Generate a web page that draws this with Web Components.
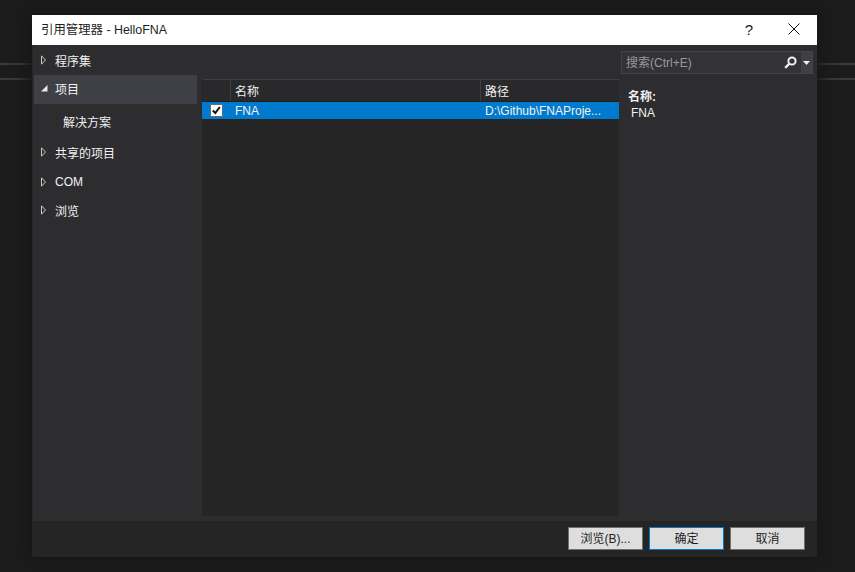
<!DOCTYPE html>
<html lang="zh">
<head>
<meta charset="utf-8">
<title>引用管理器</title>
<style>
html, body { margin: 0; height: 100%; background: #1b1b1c; overflow: hidden; }
body { font: 12px "Noto Sans CJK SC", "Liberation Sans", sans-serif; color: #f1f1f1; }
</style>
</head>
<body>
<ref-desktop>
  <ref-dialog heading="引用管理器 - HelloFNA">
    <ref-nav slot="nav">
      <nav-item arrow="closed">程序集</nav-item>
      <nav-item arrow="open" selected up>项目</nav-item>
      <nav-item sub>解决方案</nav-item>
      <nav-item arrow="closed" up>共享的项目</nav-item>
      <nav-item arrow="closed">COM</nav-item>
      <nav-item arrow="closed" up>浏览</nav-item>
    </ref-nav>
    <ref-table slot="list"></ref-table>
    <search-box slot="search"></search-box>
    <ref-details slot="details"></ref-details>
    <dlg-button slot="buttons">浏览(B)...</dlg-button>
    <dlg-button slot="buttons" primary>确定</dlg-button>
    <dlg-button slot="buttons">取消</dlg-button>
  </ref-dialog>
</ref-desktop>
<script>
'use strict';

const UI_FONT = '"Liberation Sans", "Noto Sans CJK SC", sans-serif';

class Base extends HTMLElement
{
    constructor(html)
    {
        super();
        this.attachShadow({ mode: 'open' }).innerHTML = html;
    }
}

class RefDesktop extends Base {
    constructor()
    {
        super(`
        <style>
        :host { display: block; position: relative; width: 855px; height: 572px; overflow: hidden; background: #1c1c1c; }
        .line { position: absolute; left: 0; right: 0; height: 2px; background: #3a3a3b; }
        .wrap { position: absolute; inset: 0; padding: 15px 38px 15px 32px; display: flex; }
        </style>
        <div class="line" style="top:63px"></div>
        <div class="line" style="top:78px"></div>
        <div class="wrap"><slot></slot></div>`);
    }
}

class RefDialog extends Base {
    constructor()
    {
        super(`
        <style>
        :host { display: flex; flex-direction: column; width: 785px; height: 542px; background: #2d2d30;
            box-shadow: 0 0 14px 6px #181818; font-family: ${UI_FONT}; font-size: 12px; color: #f1f1f1; }
        header { height: 30px; flex: none; background: #fff; color: #1e1e1e; display: flex; align-items: center; font-size: 12.400px; padding: 0 0 2px 9px; box-sizing: border-box; }
        header span { flex: 1; }
        .help { width: 14px; margin-right: 32px; font-size: 15px; text-align: center; }
        .close { margin-right: 17px; display: block; }
        main { flex: 1; min-height: 0; display: grid; grid-template-columns: 169px 417px 198px; border-left: 1px solid #252526; }
        .mid { padding-top: 34px; margin-bottom: 5px; display: flex; }
        .right { padding: 6px 4px 0 2px; display: flex; flex-direction: column; }
        footer { height: 36px; flex: none; background: #252526; display: flex; justify-content: flex-end; gap: 6px; padding: 6px 12px 0 0; box-sizing: border-box; }
        </style>
        <header><span id="t"></span><div class="help">?</div>
            <svg class="close" width="12" height="12" viewBox="0 0 12 12"><path d="M.5.5l11 11M11.500.5l-11 11" stroke="#111" fill="none"/></svg>
        </header>
        <main>
            <div class="left"><slot name="nav"></slot></div>
            <div class="mid"><slot name="list"></slot></div>
            <div class="right"><slot name="search"></slot><slot name="details"></slot></div>
        </main>
        <footer><slot name="buttons"></slot></footer>`);
        this.shadowRoot.getElementById('t').textContent = this.getAttribute('heading');
    }
}

class RefNav extends Base {
    constructor()
    {
        super(`
        <style>:host { display: flex; flex-direction: column; padding: 1px 0 0 1px; width: 163px; }</style>
        <slot></slot>`);
    }
}

class NavItem extends Base {
    constructor()
    {
        super(`
        <style>
        :host { display: flex; align-items: center; height: 29px; padding: 0 0 1px 7px; box-sizing: border-box; color: #f1f1f1; }
        :host([up]) { padding-bottom: 3px; }
        :host([selected]) { background: #3f3f46; }
        :host([sub]) { height: 35px; padding-left: 29px; }
        .a { width: 14px; flex: none; display: flex; }
        svg { display: block; }
        </style>
        <span class="a"></span><slot></slot>`);
        const kind = this.getAttribute('arrow');
        const a = this.shadowRoot.querySelector('.a');
        if (kind === 'closed') {
            a.innerHTML = '<svg width="6" height="10" viewBox="0 0 6 10"><path d="M.5.800L4.500 5 .5 9.200z" fill="none" stroke="#c8c8c8"/></svg>';
        } else if (kind === 'open') {
            a.innerHTML = '<svg width="7" height="7" viewBox="0 0 7 7"><path d="M0 6.500L6.500 0v6.500z" fill="#e8e8e8"/></svg>';
        } else {
            a.remove();
        }
    }
}

class RefTable extends Base {
    constructor()
    {
        super(`
        <style>
        :host { display: block; flex: 1; background: #252526; }
        .row { display: grid; grid-template-columns: 28px 250px 1fr; align-items: center; }
        .head { height: 23px; margin-left: 1px; grid-template-columns: 27px 250px 1fr; border-top: 1px solid #3f3f46; border-bottom: 1px solid #1f1f20; box-sizing: border-box; background: #29292b; color: #f1f1f1; }
        .head > div { height: 100%; display: flex; align-items: center; padding: 0 0 1px 4px; box-sizing: border-box; border-left: 1px solid #3f3f46; }
        .head > div:first-child { border-left: 0; }
        .sel { height: 17px; background: #007acc; color: #f1f1f1; }
        .sel > div { padding-left: 5px; white-space: nowrap; overflow: hidden; }
        .sel > div:first-child { padding: 0; display: flex; justify-content: center; }
        .box { width: 13px; height: 13px; background: #fff; border: 1px solid #5a6f80; display: block; box-sizing: border-box; }
        </style>
        <div class="row head"><div></div><div>名称</div><div>路径</div></div>
        <div class="row sel">
            <div><svg class="box" viewBox="0 0 11 11"><path d="M1.800 5.500l2.500 2.500 4.500-6" fill="none" stroke="#111" stroke-width="2"/></svg></div>
            <div>FNA</div><div>D:\\Github\\FNAProje...</div>
        </div>`);
    }
}

class SearchBox extends Base {
    constructor()
    {
        super(`
        <style>
        :host { display: flex; height: 23px; width: 192px; box-sizing: border-box; background: #333337; border: 1px solid #434346; color: #999; align-items: center; padding-left: 4px; }
        span { flex: 1; padding-bottom: 2px; }
        .i { width: 21px; height: 100%; display: flex; align-items: center; justify-content: center; }
        .d { width: 11px; height: 100%; background: #3f3f46; display: flex; align-items: center; justify-content: center; }
        </style>
        <span>搜索(Ctrl+E)</span>
        <div class="i"><svg width="13" height="13" viewBox="0 0 13 13"><circle cx="8" cy="5" r="3.600" fill="none" stroke="#f1f1f1" stroke-width="2"/><path d="M5.500 7.500L1.200 11.800" stroke="#f1f1f1" stroke-width="2.400"/></svg></div>
        <div class="d"><svg width="7" height="4" viewBox="0 0 7 4"><path d="M0 0h7L3.500 4z" fill="#f1f1f1"/></svg></div>`);
    }
}

class RefDetails extends Base {
    constructor()
    {
        super(`
        <style>
        :host { display: block; padding: 15px 0 0 7px; line-height: 16px; }
        b { display: block; }
        div { padding-left: 3px; }
        </style>
        <b>名称:</b><div>FNA</div>`);
    }
}

class DlgButton extends Base {
    constructor()
    {
        super(`
        <style>
        :host { display: flex; align-items: center; justify-content: center; width: 75px; height: 23px; box-sizing: border-box;
            background: #dedede; border: 1px solid #707070; color: #1e1e1e; padding-bottom: 2px; }
        :host([primary]) { border-color: #007acc; }
        </style>
        <slot></slot>`);
    }
}

customElements.define('ref-desktop', RefDesktop);
customElements.define('ref-dialog', RefDialog);
customElements.define('ref-nav', RefNav);
customElements.define('nav-item', NavItem);
customElements.define('ref-table', RefTable);
customElements.define('search-box', SearchBox);
customElements.define('ref-details', RefDetails);
customElements.define('dlg-button', DlgButton);
</script>
</body>
</html>
